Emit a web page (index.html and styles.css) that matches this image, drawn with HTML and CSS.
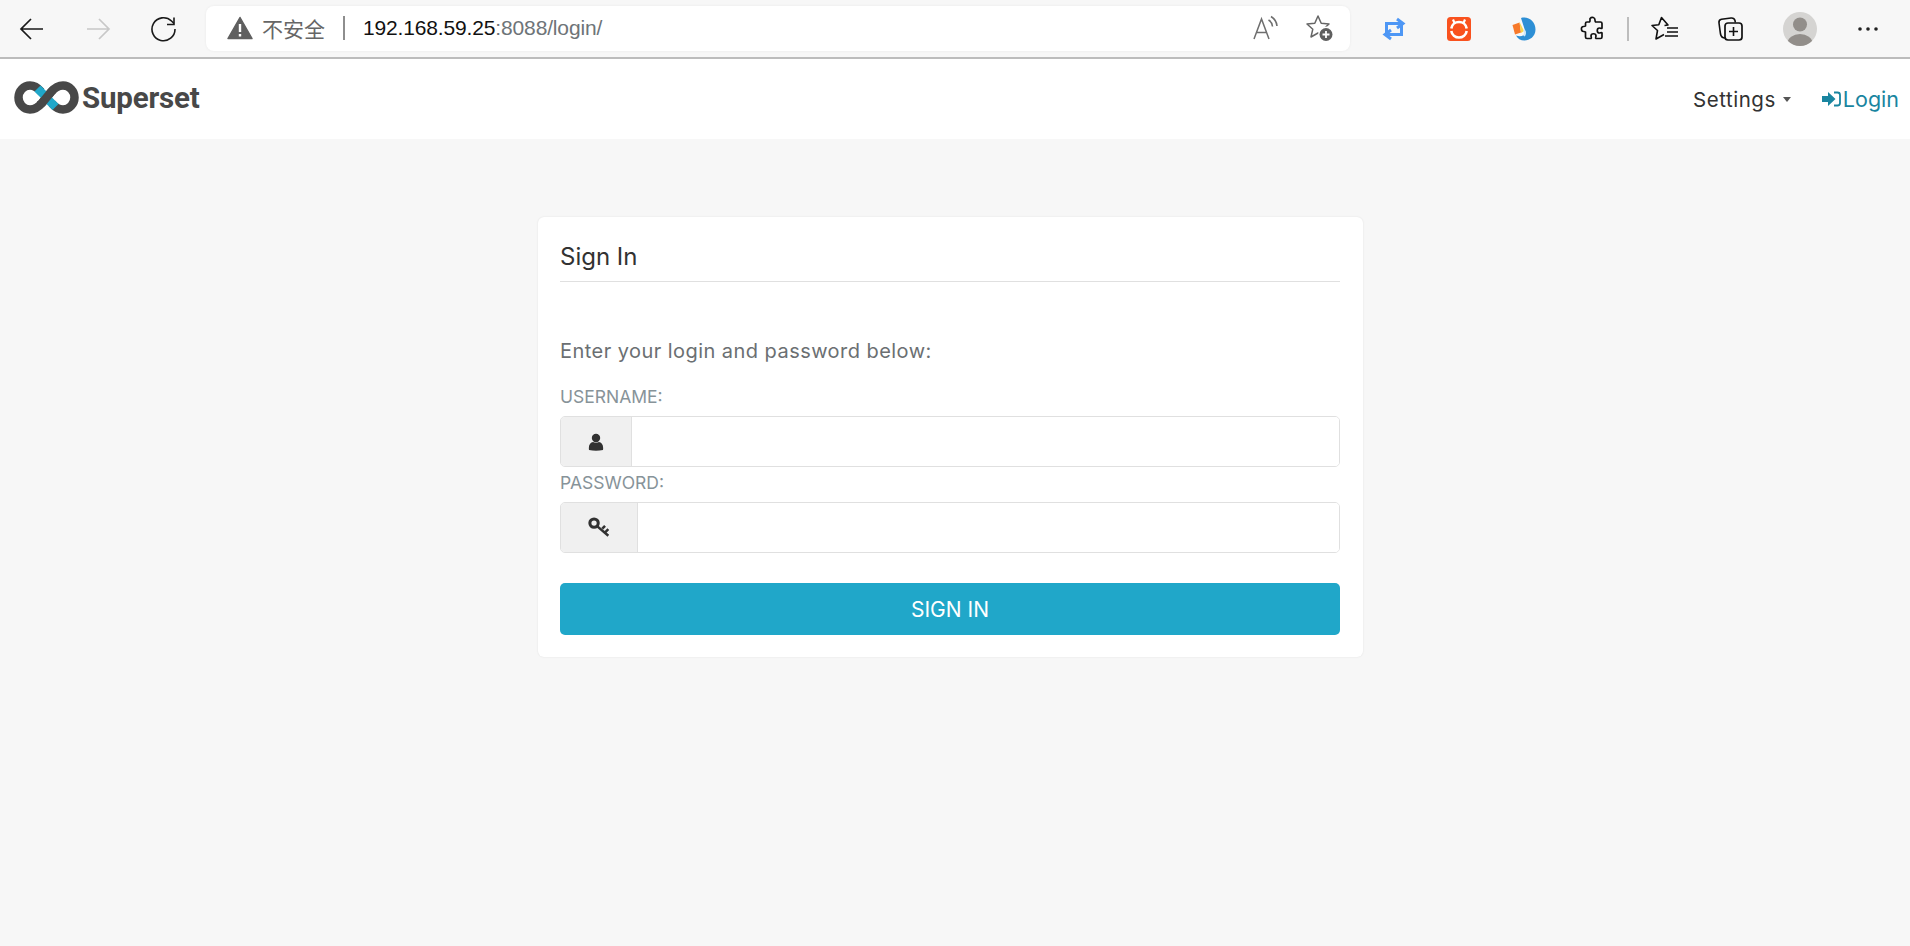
FILE: index.html
```html
<!DOCTYPE html>
<html lang="en">
<head>
<meta charset="utf-8">
<title>Superset</title>
<link rel="stylesheet" href="styles.css">
</head>
<body>
<header class="chrome">
  <div class="nav-btns">
    <svg class="ic" width="28" height="28" viewBox="0 0 28 28"><path d="M25 14H3M13 4 3 14l10 10" fill="none" stroke="#1a1a1a" stroke-width="1.700"/></svg>
    <svg class="ic" width="28" height="28" viewBox="0 0 28 28"><path d="M3 14h22M15 4l10 10-10 10" fill="none" stroke="#c8c8c8" stroke-width="1.700"/></svg>
    <svg class="ic" width="28" height="28" viewBox="0 0 28 28"><path d="M25 14A11.500 11.500 0 1 1 21.500 6L24 8.500" fill="none" stroke="#1a1a1a" stroke-width="1.600"/><path d="M24 2.500v7h-7" fill="none" stroke="#1a1a1a" stroke-width="1.600"/></svg>
  </div>
  <div class="addr">
    <svg class="warn" width="26" height="24" viewBox="0 0 26 24"><path d="M13 1.500 25 22.500H1z" fill="#5f5f5f" stroke="#5f5f5f" stroke-width="1.500" stroke-linejoin="round"/><path d="M13 8v8M13 18v2.500" stroke="#fff" stroke-width="2.400"/></svg>
    <span class="insecure">不安全</span>
    <span class="addr-sep"></span>
    <span class="url"><span class="host">192.168.59.25</span>:8088/login/</span>
    <span class="addr-end">
      <svg width="30" height="28" viewBox="0 0 30 28"><path d="M3 25 10.500 5 18 25M5.500 18.500h10" fill="none" stroke="#6e6e6e" stroke-width="1.500"/><path d="M17.500 6q3.500 2 4 6.500M20 2.500q5.500 3.500 6 9.500" fill="none" stroke="#6e6e6e" stroke-width="1.600"/></svg>
      <svg width="30" height="28" viewBox="0 0 30 28"><path d="M13 2l3.200 7.300 7.800.7-5.800 5.200 1.800 7.800-7-4-7 4 1.800-7.800L2 10l7.800-.7z" fill="none" stroke="#666" stroke-width="1.500" stroke-linejoin="round"/><circle cx="21" cy="20.500" r="8" fill="#fff"/><circle cx="21" cy="20.500" r="6.500" fill="#5f5f5f"/><path d="M21 17v7M17.500 20.500h7" stroke="#fff" stroke-width="1.800"/></svg>
    </span>
  </div>
  <div class="tools">
    <svg class="tool t1" width="26" height="28" viewBox="0 0 26 28"><path d="M5.500 19V8.500H20M16 4l6 4.500-6 4.500" fill="none" stroke="#4e97f5" stroke-width="3"/><path d="M20.500 9v10.500H6M10 15l-6 4.500 6 4.500" fill="none" stroke="#4e97f5" stroke-width="3"/></svg>
    <svg class="tool t2" width="24" height="24" viewBox="0 0 24 24"><rect width="24" height="24" rx="3.500" fill="#f9521e"/><path d="M4.300 11.500a7.800 7.800 0 0 1 15.400 0M19.700 14a7.800 7.800 0 0 1-15.400 0" fill="none" stroke="#fff" stroke-width="2.600"/><path d="M7.500 6 6 2.500M16.500 6 18 2.500" stroke="#fff" stroke-width="2.200"/></svg>
    <svg class="tool t3" width="24" height="26" viewBox="0 0 24 26"><path d="M9 2c8-2 14.500 4 14.500 11.500 0 7-6 11-11 11-4 0-7-2-8.500-5 5 2 9 0 9.500-3.500z" fill="#2d8fd5"/><path d="M0.500 9l7-2.500 1.500 10-6 2z" fill="#f7792a"/><path d="M7.500 6l4.500 9-3 2z" fill="#f8d44c"/><path d="M12 14q2 3 0 6" fill="none" stroke="#cfe8f8" stroke-width="2"/></svg>
    <svg class="tool t4" width="26" height="28" viewBox="0 0 26 28"><path d="M10 3.500c2-2 5-1 5 1.500 0 1 0 1.500.5 2h5c1 0 1.500.5 1.500 1.500v4.500c-.5 1-1.500 0-2.500 0-3 0-3 5 0 5 1 0 2-1 2.500 0v4c0 1-.500 1.500-1.500 1.500h-4.500c-1-.5 0-1.500 0-2.500 0-3-5-3-5 0 0 1 1 2 0 2.500H7c-1 0-1.500-.5-1.500-1.500v-5c-.500-.5-1-.5-2-.5-2.500 0-3-5 0-5 1 0 1.500 0 2-.5V8.500C5.500 7.500 6 7 7 7h2.500c.5-.5.5-1 .5-1.500z" fill="none" stroke="#111" stroke-width="1.700" stroke-linejoin="round"/></svg>
    <span class="tool-sep"></span>
    <svg class="tool t5" width="30" height="28" viewBox="0 0 30 28"><path d="M14.500 10.500 18 10 11.500 2.500 8.800 9.800 2 10.500l5.500 5L6 24l8-4.500" fill="none" stroke="#111" stroke-width="1.600" stroke-linejoin="round"/><path d="M17 13h11M17 17h11M15 21h13" stroke="#111" stroke-width="1.600"/></svg>
    <svg class="tool t6" width="28" height="28" viewBox="0 0 28 28"><path d="M9 23C6 23 5 21.500 4.500 19L3 8c-.3-2 .7-3.500 2.500-3.800L15 3c2-.2 3.500.8 4 2.500l.3 2" fill="none" stroke="#111" stroke-width="1.600"/><rect x="9" y="8" width="17" height="17" rx="3" fill="#f7f7f7" stroke="#111" stroke-width="1.700"/><path d="M17.500 12v9M13 16.500h9" stroke="#111" stroke-width="1.600"/></svg>
    <svg class="tool t7" width="34" height="34" viewBox="0 0 34 34"><defs><clipPath id="av"><circle cx="17" cy="17" r="17"/></clipPath></defs><circle cx="17" cy="17" r="17" fill="#d5d4d2"/><g clip-path="url(#av)" fill="#928e8a"><circle cx="17" cy="12.500" r="7"/><ellipse cx="17" cy="31" rx="12.500" ry="9"/></g></svg>
    <svg class="tool t8" width="22" height="6" viewBox="0 0 22 6"><circle cx="3" cy="3" r="1.800" fill="#222"/><circle cx="11" cy="3" r="1.800" fill="#222"/><circle cx="19" cy="3" r="1.800" fill="#222"/></svg>
  </div>
</header>

<nav class="navbar">
  <a class="brand">
    <svg class="logo" width="65" height="33" viewBox="0 0 65 33">
      <path d="M27 10.500C24 7 20.500 4.500 16 4.500 9.500 4.500 4.500 10 4.500 16.500S9.500 28.500 16 28.500c5 0 9-3 12-6.500l9-11c3-3.500 7-6.500 12-6.500 6.500 0 11.500 5.500 11.500 12S55.500 28.500 49 28.500c-4.500 0-8-2.500-11-6" fill="none" stroke="#484848" stroke-width="8.500"/>
      <path d="M23.500 7.500 31 15M34 18.500l7.500 7.500" fill="none" stroke="#20a7c9" stroke-width="8.500"/>
      <path d="M25.500 24 28 22l9-11 2.500-2.500" fill="none" stroke="#484848" stroke-width="8.500"/>
    </svg>
    <span class="brand-text">Superset</span>
  </a>
  <div class="nav-right">
    <span class="settings">Settings<i class="caret"></i></span>
    <span class="login">
      <svg width="19" height="16" viewBox="0 0 19 16"><path d="M0 5h6V1l7.500 7L6 15v-4H0z" fill="#1985a0"/><path d="M12 1.500h3.500c1.500 0 2.500 1 2.500 2.500v8c0 1.500-1 2.500-2.500 2.500H12" fill="none" stroke="#1985a0" stroke-width="1.800"/></svg>
      Login
    </span>
  </div>
</nav>

<main class="page">
  <section class="card">
    <h1 class="card-title">Sign In</h1>
    <p class="hint">Enter your login and password below:</p>
    <label class="field-label">USERNAME:</label>
    <div class="group">
      <span class="addon addon-user">
        <svg width="16" height="18" viewBox="0 0 16 18"><circle cx="8" cy="5" r="4.200" fill="#323232"/><path d="M1 17c-.8-5 1.500-7.500 4-8 1.800 1 4.200 1 6 0 2.500.5 4.800 3 4 8q-7 1.500-14 0z" fill="#323232"/></svg>
      </span>
      <span class="input"></span>
    </div>
    <label class="field-label label-pass">PASSWORD:</label>
    <div class="group">
      <span class="addon addon-key">
        <svg width="22" height="21" viewBox="0 0 20 19"><circle cx="5.500" cy="5.500" r="3.800" fill="none" stroke="#323232" stroke-width="2.800"/><path d="M8.500 8.500 18.500 17M13 10.500l2.500-2.500M16 13.500l2.500-2.500" fill="none" stroke="#323232" stroke-width="2.300"/></svg>
      </span>
      <span class="input"></span>
    </div>
    <button class="submit" type="button">SIGN IN</button>
  </section>
</main>
</body>
</html>
```

FILE: styles.css
```css
* { box-sizing: border-box; }
html, body { margin: 0; height: 100%; }
body {
  background: #f7f7f7;
  font-family: Inter, "Noto Sans", sans-serif;
  overflow: hidden;
  display: flex;
  flex-direction: column;
}
.chrome {
  height: 59px;
  flex: none;
  background: #f7f7f7;
  border-bottom: 2px solid #bcbcbc;
  display: flex;
  align-items: center;
}
.nav-btns {
  width: 206px;
  padding-left: 18px;
  display: flex;
  gap: 38px;
  flex: none;
}
.ic { display: block; }
.addr {
  width: 1144px;
  height: 45px;
  margin-top: -1px;
  background: #fff;
  border-radius: 8px;
  box-shadow: 0 0 3px rgba(0,0,0,.06);
  display: flex;
  align-items: center;
  padding-left: 21px;
  font-family: "Liberation Sans", Arial, sans-serif;
  flex: none;
}
.insecure {
  margin-left: 9px;
  font-family: "Noto Sans CJK SC", sans-serif;
  font-size: 21px;
  color: #666;
  width: 65px;
}
.addr-sep { width: 2px; height: 24px; background: #8e8e8e; margin-left: 16px; }
.url { margin-left: 18px; font-size: 21px; color: #6e7478; letter-spacing: -.15px; }
.host { color: #111; }
.addr-end { margin-left: auto; margin-right: 15px; display: flex; gap: 24px; }
.tools { flex: 1; position: relative; height: 57px; display: flex; align-items: center; padding-left: 31px; }
.tool { display: block; flex: none; }
.t2 { margin-left: 40px; }
.t3 { margin-left: 41px; }
.t4 { margin-left: 44px; }
.tool-sep { width: 2px; height: 24px; background: #bdbdbd; margin-left: 21px; }
.t5 { margin-left: 21px; }
.t6 { margin-left: 36px; }
.t7 { margin-left: 39px; }
.t8 { margin-left: 40px; }

.navbar {
  height: 80px;
  flex: none;
  background: #fff;
  display: flex;
  align-items: center;
  justify-content: space-between;
  padding: 0 11px 3px 14px;
}
.brand { display: flex; align-items: center; gap: 3px; }
.logo { display: block; }
.brand-text {
  font-family: Roboto, sans-serif;
  font-weight: 700;
  font-size: 29.500px;
  color: #484848;
  letter-spacing: -.2px;
}
.nav-right { display: flex; align-items: center; font-size: 20.500px; padding-top: 3px; }
.settings { color: #323232; display: flex; align-items: center; letter-spacing: .55px; }
.caret {
  margin-left: 7px;
  border-top: 5px solid #555;
  border-left: 4.500px solid transparent;
  border-right: 4.500px solid transparent;
}
.login { color: #1985a0; margin-left: 31px; display: flex; align-items: center; gap: 2px; font-size: 21.500px; }

.page { flex: 1; padding: 78px 0 0 538px; }
.card {
  width: 825px;
  height: 440px;
  background: #fff;
  border-radius: 6px;
  box-shadow: 0 0 2px rgba(0,0,0,.1);
  padding: 0 23px 0 22px;
  display: flex;
  flex-direction: column;
}
.card-title {
  margin: 0;
  height: 65px;
  padding-top: 25px;
  font-size: 24px;
  line-height: 30px;
  font-weight: 400;
  color: #323232;
  border-bottom: 1px solid #e0e0e0;
}
.hint {
  margin: 57px 0 0;
  font-size: 20px;
  line-height: 24px;
  color: #6b6f72;
  letter-spacing: .45px;
}
.field-label {
  display: block;
  margin-top: 24px;
  font-size: 17.500px;
  line-height: 20px;
  color: #879399;
}
.group {
  margin-top: 9px;
  height: 51px;
  border: 1px solid #e0e0e0;
  border-radius: 5px;
  display: flex;
  overflow: hidden;
  flex: none;
}
.label-pass { margin-top: 6px; }
.addon {
  background: #f0f0f0;
  border-right: 1px solid #e0e0e0;
  display: flex;
  align-items: center;
  justify-content: center;
  flex: none;
}
.addon-user { width: 71px; }
.addon-key { width: 77px; }
.input { flex: 1; background: #fff; }
.submit {
  margin-top: 30px;
  height: 52px;
  border: 0;
  border-radius: 5px;
  background: #20a7c9;
  color: #fff;
  font: 400 21px Inter, sans-serif;
}
```
